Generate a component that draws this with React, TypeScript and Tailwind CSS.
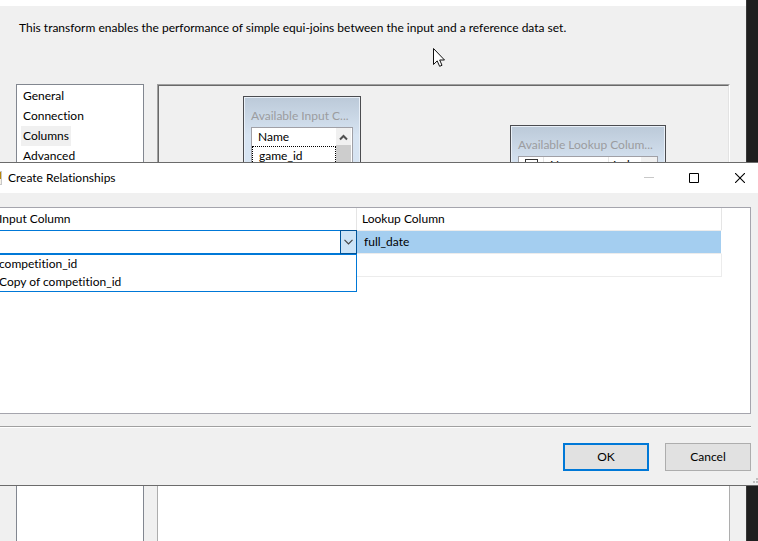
import { useState } from 'react'

const pages = ['General', 'Connection', 'Columns', 'Advanced']
const inputColumns = ['competition_id', 'Copy of competition_id']

function ColumnWindow({
  title,
  className,
  children,
}: {
  title: string
  className: string
  children: React.ReactNode
}) {
  return (
    <section className={`absolute h-48 border border-[#4b4c50] bg-[#e9f0f8] p-px ${className}`}>
      <div className="flex h-full flex-col bg-[#d7e4f2] bg-linear-to-b from-[#bccad9] to-[#d7e4f2] to-20% px-1.5 pb-1.5">
        <h2 className="h-[29px] pt-2 leading-5 whitespace-nowrap text-[#9b9c9f]">{title}</h2>
        <div className="flex-1 overflow-hidden border border-[#a0a0a6] bg-white">{children}</div>
      </div>
    </section>
  )
}

function Scrollbar() {
  return (
    <div className="mr-px w-[15px] shrink-0 bg-[#f0f0f0]">
      <svg className="block h-[17px] w-[15px]" viewBox="0 0 15 17" fill="none" stroke="#505050" strokeWidth={2}>
        <path d="M4 11.5 7.5 8 11 11.5" />
      </svg>
      <div className="h-20 bg-[#cdcdcd]" />
    </div>
  )
}

function PageList() {
  const [page, setPage] = useState('Columns')

  return (
    <nav className="w-32 shrink-0 border border-[#828790] bg-white px-1 py-px">
      {pages.map((name) => (
        <button
          key={name}
          type="button"
          onClick={() => setPage(name)}
          className={`block h-5 px-0.5 ${page === name ? 'bg-[#f0f0f0]' : ''}`}
        >
          {name}
        </button>
      ))}
    </nav>
  )
}

function TransformEditor() {
  return (
    <main className="flex flex-1 flex-col border-t-[6px] border-white bg-[#f0f0f0] px-4 pt-3">
      <p className="h-[66px] pl-[3px] leading-5">
        This transform enables the performance of simple equi-joins between the input and a reference data set.
      </p>
      <div className="-mb-4 flex flex-1 gap-[13px]">
        <PageList />
        <div className="flex flex-1 flex-col gap-3">
          <div className="h-72 border border-t-[#a0a0a0] border-r-white border-b-white border-l-[#a0a0a0]">
            <div className="relative h-full border border-t-[#696969] border-r-[#e3e3e3] border-b-[#e3e3e3] border-l-[#696969]">
              <ColumnWindow title="Available Input C..." className="top-2.5 left-[84px] w-[118px]">
                <div className="flex">
                  <div className="flex-1">
                    <div className="h-[18px] pl-1.5 leading-[18px]">Name</div>
                    <div className="h-5 border border-dotted border-black pl-1.5 leading-[18px]">game_id</div>
                  </div>
                  <Scrollbar />
                </div>
              </ColumnWindow>
              <ColumnWindow title="Available Lookup Colum..." className="top-[39px] right-[62px] w-[156px]">
                <div className="flex h-5 bg-[#f0f0f0]">
                  <div className="w-6 bg-white pt-0.5 pl-1.5">
                    <input
                      type="checkbox"
                      aria-label="Select all columns"
                      className="block size-[13px] appearance-none border border-[#333] bg-white p-0.5 before:block before:h-full before:bg-[#333]"
                    />
                  </div>
                  <div className="w-[65px] border-l border-[#e5e5e5] bg-white pl-1.5 leading-4">Name</div>
                  <div className="w-[33px] border-l border-[#e5e5e5] bg-white pl-1 leading-4">Index</div>
                </div>
              </ColumnWindow>
            </div>
          </div>
          <div className="flex-1 border border-[#adadad] bg-white" />
        </div>
      </div>
    </main>
  )
}

function TitleBar() {
  return (
    <header className="flex h-[30px] items-center bg-white pl-2.5">
      <svg className="size-4 shrink-0" viewBox="0 0 16 16">
        <path d="M0 1h16v14H0z" fill="#c8c8c8" />
        <path d="M1 2h14v7H1z" fill="#b8860b" />
        <path d="M1 9h14v5H1z" fill="#f4f0e6" />
      </svg>
      <h1 className="flex-1 pl-1.5">Create Relationships</h1>
      <button type="button" aria-label="Minimize" disabled className="flex h-full w-[45px] items-center justify-center">
        <svg className="size-[10px]" viewBox="0 0 10 10" stroke="#c8c8c8">
          <path d="M0 4.5h10" />
        </svg>
      </button>
      <button type="button" aria-label="Maximize" className="flex h-full w-[45px] items-center justify-center">
        <svg className="size-[10px]" viewBox="0 0 10 10" fill="none" stroke="#000">
          <path d="M.5.5h9v9h-9z" />
        </svg>
      </button>
      <button type="button" aria-label="Close" className="mr-[-6px] flex h-full w-12 items-center justify-center">
        <svg className="size-[10px]" viewBox="0 0 10 10" fill="none" stroke="#000" strokeWidth={1.1}>
          <path d="m0 0 10 10M10 0 0 10" />
        </svg>
      </button>
    </header>
  )
}

function InputColumnPicker() {
  const [value, setValue] = useState('')
  const [open, setOpen] = useState(true)

  return (
    <div className="relative h-6">
      <select
        aria-label="Input Column"
        value={value}
        onChange={(e) => setValue(e.target.value)}
        className="block h-6 w-full appearance-none border border-[#0078d7] bg-white px-6"
      >
        <option value="" />
        {inputColumns.map((name) => (
          <option key={name}>{name}</option>
        ))}
      </select>
      <button
        type="button"
        aria-label="Show columns"
        onClick={() => setOpen(!open)}
        className="absolute top-0 right-0 flex h-6 w-[17px] items-center justify-center border border-[#005499] bg-[#cce4f7]"
      >
        <svg className="h-[6px] w-[9px]" viewBox="0 0 9 6" fill="none" stroke="#444" strokeWidth={1.2}>
          <path d="m.5.8 4 4 4-4" />
        </svg>
      </button>
      {open && (
        <ul role="listbox" aria-label="Input columns" className="absolute top-full right-0 left-0 border border-[#0078d7] bg-white">
          {inputColumns.map((name) => (
            <li
              key={name}
              role="option"
              aria-selected={value === name}
              onClick={() => {
                setValue(name)
                setOpen(false)
              }}
              className="h-[18px] pl-[21px] leading-[18px]"
            >
              {name}
            </li>
          ))}
        </ul>
      )}
    </div>
  )
}

function RelationshipsDialog() {
  return (
    <div
      role="dialog"
      aria-label="Create Relationships"
      className="absolute top-[162px] right-0 -left-6 border-y border-[#6b6b6b] bg-[#f0f0f0]"
    >
      <TitleBar />
      <div className="pt-3.5 pr-[7px]">
        <div className="h-[207px] border border-[#a5a5ad] bg-white pr-7">
          <table className="w-full table-fixed border-separate border-spacing-0 text-left">
            <colgroup>
              <col />
              <col className="w-[365px]" />
            </colgroup>
            <thead>
              <tr className="h-[22px]">
                <th className="border-r border-[#e5e5e5] p-0 pl-[22px] font-normal">Input Column</th>
                <th className="border-r border-[#e5e5e5] p-0 pl-[5px] font-normal">Lookup Column</th>
              </tr>
            </thead>
            <tbody>
              <tr className="h-6">
                <td className="p-0">
                  <InputColumnPicker />
                </td>
                <td className="border-y border-r border-y-[#ececec] border-r-white bg-[#a4cef0] bg-clip-padding p-0 pl-[7px]">
                  full_date
                </td>
              </tr>
              <tr className="h-[23px]">
                <td className="border-r border-b border-[#ececec] p-0" />
                <td className="border-r border-b border-[#ececec] p-0" />
              </tr>
            </tbody>
          </table>
        </div>
        <hr className="mt-3 h-0.5 border-t border-b border-t-[#a0a0a0] border-b-white" />
      </div>
      <footer className="relative flex h-[57px] justify-end gap-4 pt-[15px] pr-[7px]">
        <button type="button" className="h-7 w-[86px] border-2 border-[#0078d7] bg-[#e1e1e1]">
          OK
        </button>
        <button type="button" className="h-7 w-[86px] border border-[#adadad] bg-[#e1e1e1]">
          Cancel
        </button>
        <svg className="absolute right-0 bottom-0.5 h-[5px] w-[5px]" viewBox="0 0 5 5" fill="#bfbfbf">
          <path d="M3 0h2v2H3zM0 3h2v2H0zM3 3h2v2H3z" />
        </svg>
      </footer>
    </div>
  )
}

function Pointer() {
  return (
    <svg className="pointer-events-none absolute top-12 left-[433px] h-[19px] w-3" viewBox="0 0 12 19">
      <path d="M.5.5v16l3.7-3.6 2.4 5.4 2.4-1-2.3-5.3h4.8z" fill="#fff" stroke="#111" />
    </svg>
  )
}

export default function App() {
  return (
    <div className="relative flex h-screen overflow-hidden bg-[#1f1f1f] font-[Lato,'Open_Sans',sans-serif] text-[12px] text-black [font-variant-ligatures:none]">
      <TransformEditor />
      <div className="w-3 shrink-0 border-l border-[#383838]" />
      <RelationshipsDialog />
      <Pointer />
    </div>
  )
}
